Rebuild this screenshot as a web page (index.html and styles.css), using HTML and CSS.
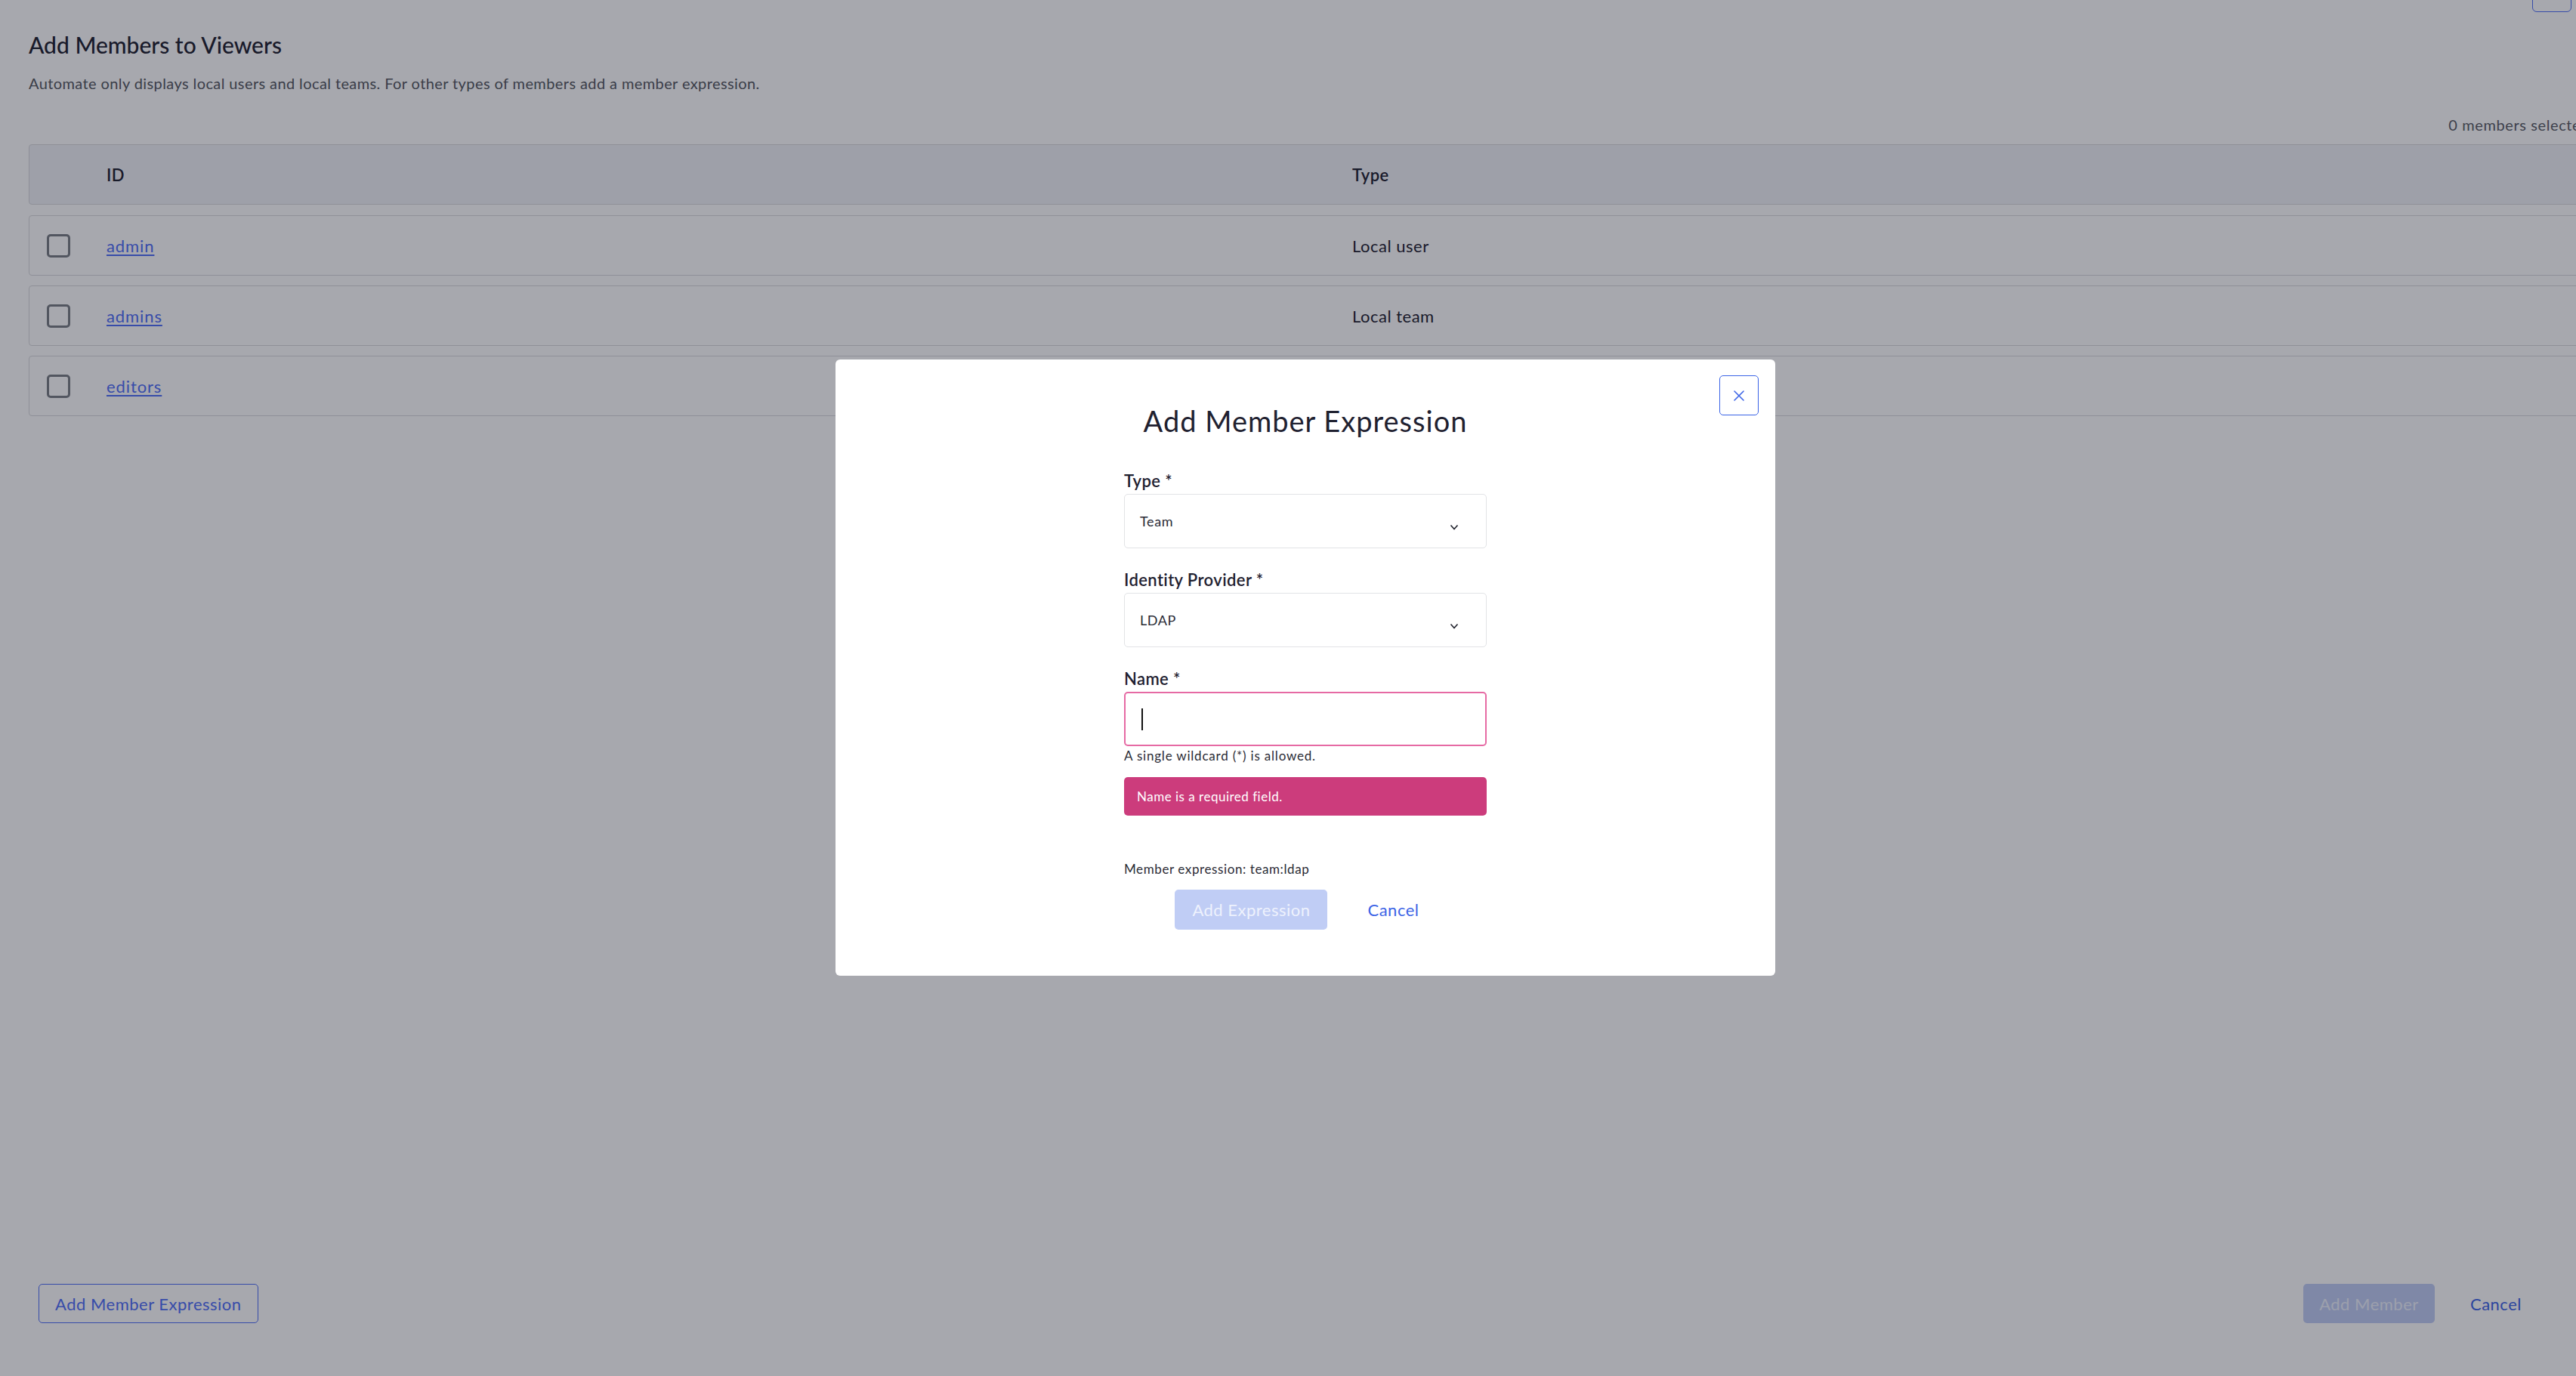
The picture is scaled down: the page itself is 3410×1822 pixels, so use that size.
FILE: index.html
```html
<!DOCTYPE html>
<html lang="en">
<head>
<meta charset="utf-8">
<title>Add Members to Viewers</title>
<link rel="stylesheet" href="styles.css">
</head>
<body>
<div class="app">
  <main class="page">
    <div class="topbar"><button class="top-btn" aria-label="Close"></button></div>
    <div class="content">
      <h1 class="page-title">Add Members to Viewers</h1>
      <p class="page-sub">Automate only displays local users and local teams. For other types of members add a member expression.</p>
      <div class="counter-row"><span class="counter">0 members selected</span></div>
      <div class="table">
        <div class="row-grid thead">
          <div class="cell-check"></div>
          <div class="cell">ID</div>
          <div class="cell">Type</div>
        </div>
        <div class="row-grid trow">
          <div class="cell-check"><span class="check"></span></div>
          <div class="cell"><a class="link" href="#">admin</a></div>
          <div class="cell">Local user</div>
        </div>
        <div class="row-grid trow">
          <div class="cell-check"><span class="check"></span></div>
          <div class="cell"><a class="link" href="#">admins</a></div>
          <div class="cell">Local team</div>
        </div>
        <div class="row-grid trow">
          <div class="cell-check"><span class="check"></span></div>
          <div class="cell"><a class="link" href="#">editors</a></div>
          <div class="cell">Local team</div>
        </div>
      </div>
    </div>
  </main>
  <footer class="footer">
    <button class="btn btn-outline">Add Member Expression</button>
    <div class="footer-actions">
      <button class="btn btn-disabled footer-add">Add Member</button>
      <button class="btn btn-text">Cancel</button>
    </div>
  </footer>
</div>

<div class="overlay">
  <div class="modal">
    <button class="modal-close" aria-label="Close">
      <svg width="16" height="16" viewBox="0 0 16 16"><path d="M2 2 L14 14 M14 2 L2 14" stroke="#3c64e6" stroke-width="1.6" fill="none" stroke-linecap="round"/></svg>
    </button>
    <h2 class="modal-title">Add Member Expression</h2>
    <div class="form">
      <label class="field-label">Type *</label>
      <div class="select">
        <span>Team</span>
        <svg class="chev" width="12" height="8" viewBox="0 0 12 8"><path d="M1.5 1.5 L6 6.5 L10.5 1.5" stroke="#22242e" stroke-width="1.6" fill="none"/></svg>
      </div>
      <label class="field-label gap">Identity Provider *</label>
      <div class="select">
        <span>LDAP</span>
        <svg class="chev" width="12" height="8" viewBox="0 0 12 8"><path d="M1.5 1.5 L6 6.5 L10.5 1.5" stroke="#22242e" stroke-width="1.6" fill="none"/></svg>
      </div>
      <label class="field-label gap">Name *</label>
      <div class="text-input invalid"><span class="caret"></span></div>
      <div class="helper">A single wildcard (*) is allowed.</div>
      <div class="error">Name is a required field.</div>
      <div class="expr">Member expression: team:ldap</div>
    </div>
    <div class="modal-actions">
      <button class="btn btn-disabled modal-add">Add Expression</button>
      <button class="btn btn-text modal-cancel">Cancel</button>
    </div>
  </div>
</div>
</body>
</html>
```
FILE: styles.css
```css
html, body {
  margin: 0;
  height: 100%;
  overflow: hidden;
}

body {
  font-family: Lato, "Noto Sans", sans-serif;
  color: #1f2130;
  background: #ffffff;
}

.app {
  display: flex;
  flex-direction: column;
  height: 100vh;
}

.page {
  flex: 1;
  min-height: 0;
  overflow: hidden;
}

.topbar {
  height: 16px;
  display: flex;
  justify-content: flex-end;
  align-items: flex-end;
  padding-right: 6px;
}

.top-btn {
  flex: none;
  width: 52px;
  height: 52px;
  border: 1.5px solid #4f6ef7;
  border-radius: 6px;
  background: #ffffff;
}

.content {
  width: 3390px;
  margin-left: 38px;
  padding-top: 25px;
}

.page-title {
  margin: 0;
  font-size: 30px;
  line-height: 36px;
  font-weight: 500;
}

.page-sub {
  margin: 21px 0 0;
  font-size: 20px;
  line-height: 24px;
  color: #55585f;
  letter-spacing: 0.4px;
}

.counter-row {
  display: flex;
  justify-content: flex-end;
  margin-top: 31px;
}

.counter {
  font-size: 20px;
  line-height: 24px;
  color: #5a5d66;
  letter-spacing: 0.6px;
  white-space: nowrap;
}

.table {
  margin-top: 14px;
  display: flex;
  flex-direction: column;
  gap: 13px;
}

.row-grid {
  display: grid;
  grid-template-columns: 102px 1649px 1fr;
  align-items: center;
  height: 80px;
  box-sizing: border-box;
  border: 1px solid #d9dadd;
  border-radius: 4px;
  font-size: 22px;
  letter-spacing: 0.5px;
}

.thead {
  background: #f1f3f7;
  font-weight: 600;
  margin-bottom: 1px;
}

.trow {
  background: #ffffff;
}

.cell-check {
  display: flex;
  align-items: center;
  padding-left: 23px;
}

.check {
  width: 31px;
  height: 31px;
  box-sizing: border-box;
  border: 3px solid #7a7f85;
  border-radius: 5px;
}

.link {
  color: #4f6ef7;
  text-decoration: underline;
  text-underline-offset: 3px;
  letter-spacing: 0.9px;
}

.footer {
  display: flex;
  justify-content: space-between;
  align-items: center;
  padding: 0 50px 70px 51px;
}

.footer-actions {
  display: flex;
  align-items: center;
  gap: 25px;
}

.btn {
  height: 52px;
  font-family: inherit;
  font-size: 22px;
  border-radius: 5px;
  cursor: pointer;
  letter-spacing: 0.5px;
  white-space: nowrap;
}

.btn-outline {
  padding: 0 21px;
  border: 1.5px solid #4f6ef7;
  color: #4f6ef7;
  background: #ffffff;
}

.btn-disabled {
  padding: 0 22px;
  border: none;
  background: #c0cdf5;
  color: #eef2fd;
}

.btn-text {
  padding: 0 22px;
  border: none;
  background: none;
  color: #3c64e6;
}

.footer-add {
  width: 174px;
  padding: 0;
}

/* Overlay + modal */
.overlay {
  position: fixed;
  inset: 0;
  background: rgba(14, 16, 34, 0.365);
  display: flex;
  align-items: center;
  justify-content: center;
  padding: 0 0 54px 46px;
}

.modal {
  position: relative;
  width: 1244px;
  box-sizing: border-box;
  background: #ffffff;
  border-radius: 6px;
  padding: 58px 0 61px;
  display: flex;
  flex-direction: column;
  align-items: center;
}

.modal-close {
  position: absolute;
  top: 21px;
  right: 22px;
  width: 52px;
  height: 53px;
  border: 1px solid #3c64e6;
  border-radius: 5px;
  background: #ffffff;
  display: flex;
  align-items: center;
  justify-content: center;
  padding: 0;
}

.modal-title {
  margin: 0;
  font-size: 38px;
  line-height: 46px;
  font-weight: 400;
  color: #1f2130;
  letter-spacing: 1px;
}

.form {
  width: 480px;
  margin-top: 44px;
  display: flex;
  flex-direction: column;
}

.field-label {
  font-size: 22px;
  line-height: 26px;
  font-weight: 600;
  margin-bottom: 4px;
  letter-spacing: 0.4px;
}

.field-label.gap {
  margin-top: 29px;
}

.select {
  height: 72px;
  box-sizing: border-box;
  border: 1px solid #e2e3e6;
  border-radius: 5px;
  display: flex;
  align-items: center;
  justify-content: space-between;
  padding: 0 36px 0 20px;
  font-size: 18px;
  letter-spacing: 0.6px;
  color: #2a2b35;
}

.chev {
  margin-top: 16px;
}

.text-input {
  height: 72px;
  box-sizing: border-box;
  border: 2px solid #e66aa4;
  border-radius: 5px;
  display: flex;
  align-items: center;
  padding-left: 21px;
}

.caret {
  width: 2px;
  height: 29px;
  background: #111111;
}

.helper {
  margin-top: 3px;
  font-size: 17px;
  line-height: 20px;
  letter-spacing: 0.8px;
  color: #2a2b35;
}

.error {
  margin-top: 18px;
  height: 51px;
  box-sizing: border-box;
  background: #cc3c7c;
  border-radius: 5px;
  color: #ffffff;
  font-size: 17px;
  letter-spacing: 0.5px;
  display: flex;
  align-items: center;
  padding: 0 17px;
}

.expr {
  margin-top: 61px;
  font-size: 17px;
  line-height: 20px;
  letter-spacing: 0.6px;
  color: #2a2b35;
}

.modal-actions {
  margin-top: 17px;
  display: flex;
  align-items: center;
  gap: 31px;
}

.modal-add {
  height: 53px;
  width: 202px;
  padding: 0;
}

.modal-cancel {
  height: 53px;
}
```
